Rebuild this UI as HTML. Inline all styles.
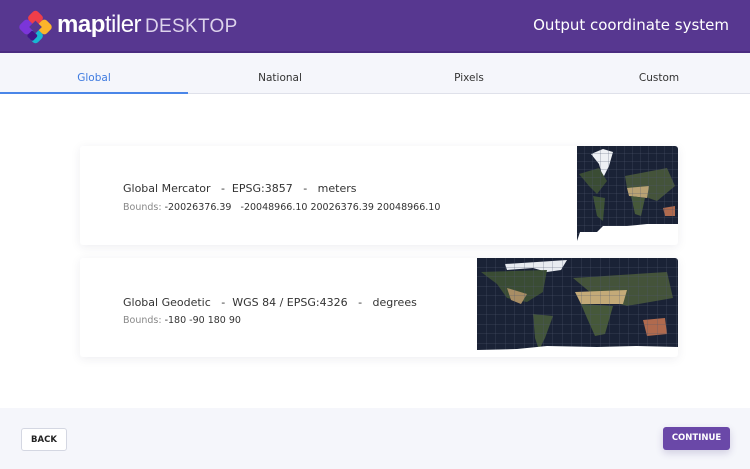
<!DOCTYPE html>
<html><head><meta charset="utf-8"><style>
*{margin:0;padding:0;box-sizing:border-box}
body{width:750px;height:469px;overflow:hidden;background:#fff;font-family:"DejaVu Sans","Liberation Sans",sans-serif;position:relative}
.hdr{position:absolute;left:0;top:0;width:750px;height:53px;background:#573790;border-bottom:2px solid #4a2c80}
.brand{position:absolute;left:57px;top:11px;color:#fff;font-size:24px;letter-spacing:-0.5px;font-family:"Liberation Sans",sans-serif}
.brand b{font-weight:700}
.brand span{font-size:19px;color:#ddd3ec;letter-spacing:0.3px;margin-left:4px}
.title{position:absolute;right:21px;top:16px;color:#fff;font-size:15px}
.tabs{position:absolute;left:0;top:53px;width:750px;height:41px;background:#f5f6fb;border-bottom:1px solid #dfe1ea}
.tab{position:absolute;top:19px;font-size:10.5px;color:#333;transform:translateX(-50%)}
.ul{position:absolute;left:0;top:92px;width:188px;height:2px;background:#4a86e8}
.card{position:absolute;left:80px;width:598px;height:99px;background:#fff;border-radius:3px;box-shadow:0 2px 10px rgba(40,40,80,.08);overflow:hidden}
.t1{position:absolute;left:43px;font-size:11px;color:#333;white-space:pre}
.t2{position:absolute;left:43px;font-size:9.5px;color:#333;white-space:pre}
.t2 i{font-style:normal;color:#888}
.ftr{position:absolute;left:0;top:408px;width:750px;height:61px;background:#f5f6fb}
.btn{position:absolute;font-size:8.5px;font-weight:bold;border-radius:3px;text-align:center;line-height:22px}
</style></head><body>
<div class="hdr">
<svg style="position:absolute;left:18px;top:8px" width="35" height="37" viewBox="0 0 35 37">
<g transform="translate(17.5 19) rotate(45)">
<rect x="-12.5" y="-12.5" width="12.5" height="12.5" rx="3.5" fill="#ee3e4a"/>
<rect x="0" y="-12.5" width="12.5" height="12.5" rx="3.5" fill="#fbb52b"/>
<rect x="0" y="0" width="12.5" height="12.5" rx="3.5" fill="#19b6d2"/>
<rect x="-12.5" y="0" width="12.5" height="12.5" rx="3.5" fill="#7b35d9"/>
<rect x="0" y="4.5" width="8" height="8" rx="2" fill="#42158a"/>
<rect x="-4.5" y="-4.5" width="9" height="9" fill="#573790"/>
</g>
</svg>
<div class="brand"><b>map</b>tiler<span>DESKTOP</span></div>
<div class="title">Output coordinate system</div>
</div>
<div class="tabs">
<div class="tab" style="left:94px;color:#3f7be0">Global</div>
<div class="tab" style="left:280px">National</div>
<div class="tab" style="left:469px">Pixels</div>
<div class="tab" style="left:659px">Custom</div>
</div>
<div class="ul"></div>
<div class="card" style="top:146px">
<div class="t1" style="top:36px">Global Mercator   -  EPSG:3857   -   meters</div>
<div class="t2" style="top:56px"><i>Bounds:</i> -20026376.39   -20048966.10 20026376.39 20048966.10</div>
<svg style="position:absolute;left:497px;top:0" width="101" height="95" viewBox="0 0 101 95">
<defs><pattern id="g" width="8" height="8" patternUnits="userSpaceOnUse"><path d="M8 0V8H0" fill="none" stroke="#4f5870" stroke-width=".5"/></pattern></defs>
<rect width="101" height="95" fill="#1a2236"/>
<path d="M14 8 L26 3 L36 6 L32 20 L26 32 L22 18 Z" fill="#eef0f4"/>
<path d="M2 28 L22 22 L30 35 L20 48 L12 40 Z" fill="#3a4c34"/>
<path d="M16 50 L28 52 L26 75 L20 70 Z" fill="#3e5236"/>
<path d="M48 30 L90 22 L98 40 L80 55 L60 48 L50 42 Z" fill="#44533a"/>
<path d="M50 42 L72 40 L70 52 L52 50 Z" fill="#b9a274"/>
<path d="M54 50 L68 52 L64 70 L58 68 Z" fill="#46583a"/>
<path d="M86 62 L98 60 L98 70 L88 70 Z" fill="#b06a4e"/>
<rect width="101" height="95" fill="url(#g)"/>
<path d="M0 95 L3 86 L20 86 L26 80 L50 80 L70 78 L101 78 L101 95 Z" fill="#fff"/>
</svg>
</div>
<div class="card" style="top:258px">
<div class="t1" style="top:38px">Global Geodetic   -  WGS 84 / EPSG:4326   -   degrees</div>
<div class="t2" style="top:57px"><i>Bounds:</i> -180 -90 180 90</div>
<svg style="position:absolute;left:397px;top:0" width="201" height="95" viewBox="0 0 201 95">
<defs><pattern id="g2" width="9.5" height="9.5" patternUnits="userSpaceOnUse"><path d="M9.5 0V9.5H0" fill="none" stroke="#4f5870" stroke-width=".5"/></pattern></defs>
<rect width="201" height="95" fill="#1a2236"/>
<path d="M28 6 L60 4 L90 2 L84 12 L70 14 L56 10 L30 12 Z" fill="#e8ebf0"/>
<path d="M4 14 L70 12 L66 34 L50 44 L30 40 L20 26 Z" fill="#3a4c34"/>
<path d="M30 30 L50 36 L44 46 L34 42 Z" fill="#a88d64"/>
<path d="M56 56 L76 58 L68 80 L62 92 L58 80 Z" fill="#42543a"/>
<path d="M96 20 L190 14 L196 40 L150 48 L120 40 Z" fill="#44533a"/>
<path d="M98 34 L150 32 L146 46 L104 46 Z" fill="#c4aa78"/>
<path d="M104 46 L136 48 L128 76 L118 78 L110 60 Z" fill="#46583a"/>
<path d="M166 62 L188 60 L190 76 L170 78 Z" fill="#b06a4e"/>
<rect width="201" height="95" fill="url(#g2)"/>
<path d="M0 95 L0 92 L40 91 L70 88 L120 89 L160 88 L201 89 L201 95 Z" fill="#fff"/>
</svg>
</div>
<div class="ftr"></div>
<div class="btn" style="left:21px;top:428px;width:46px;height:23px;background:#fff;border:1px solid #d4d7e2;color:#222">BACK</div>
<div class="btn" style="left:663px;top:427px;width:67px;height:23px;background:#6a48a8;color:#fff;box-shadow:0 3px 8px rgba(60,40,120,.2)">CONTINUE</div>
</body></html>
